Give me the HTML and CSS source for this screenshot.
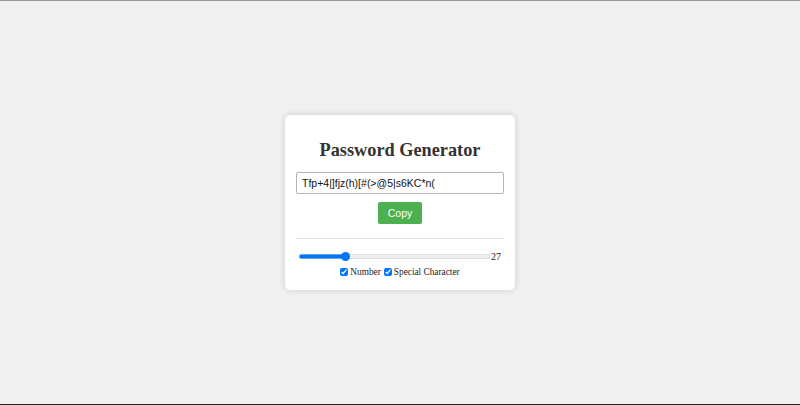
FILE: index.html
```html
<!DOCTYPE html>
<html>
<head>
<meta charset="utf-8">
<link rel="stylesheet" href="styles.css">
</head>
<body>
<div class="page">
  <div class="card">
    <h1 class="title">Password Generator</h1>
    <input class="pw" type="text" value="Tfp+4|]fjz(h)[#(&gt;@5|s6KC*n(" readonly>
    <div class="btn-row"><button class="copy">Copy</button></div>
    <div class="rule"></div>
    <div class="slider-row">
      <input class="range" type="range" min="5" max="100" value="27" style="--fill: 24%">
      <span class="len">27</span>
    </div>
    <div class="opts">
      <label><input type="checkbox" checked> Number</label>
      <label><input type="checkbox" checked> Special Character</label>
    </div>
  </div>
</div>
</body>
</html>
```

FILE: styles.css
```css
html, body {
  margin: 0;
  padding: 0;
}
body {
  background: #f0f0f0;
  font-family: "Liberation Serif", "Times New Roman", serif;
  color: #333;
}
.page {
  box-sizing: border-box;
  height: 405px;
  border-top: 1px solid #9a9a9a;
  border-bottom: 1px solid #222;
  display: flex;
  align-items: center;
  justify-content: center;
}
.card {
  box-sizing: border-box;
  width: 230px;
  height: 175px;
  background: #fff;
  border-radius: 5px;
  box-shadow: 0 0 6px rgba(0,0,0,0.15);
  padding: 24px 11px 12px;
  text-align: center;
}
.title {
  margin: 0 0 11px;
  height: 22px;
  line-height: 22px;
  font-size: 18.3px;
  font-weight: bold;
  color: #333;
}
.pw {
  box-sizing: border-box;
  display: block;
  width: 100%;
  height: 22px;
  font-family: "Liberation Sans", Arial, sans-serif;
  font-size: 10.5px;
  padding: 0 5px;
  border: 1px solid #b5b5b5;
  border-radius: 2px;
  color: #111;
  outline: none;
}
.btn-row {
  margin-top: 8px;
  height: 22px;
}
.copy {
  height: 22px;
  width: 44px;
  background: #4caf50;
  color: #fff;
  border: none;
  border-radius: 2px;
  font-family: "Liberation Sans", Arial, sans-serif;
  font-size: 10.5px;
  padding: 0;
  vertical-align: top;
}
.rule {
  height: 1px;
  background: #e3e3e8;
  margin: 14px 0 9px;
}
.slider-row {
  display: flex;
  align-items: center;
  height: 16px;
  padding-right: 3px;
}
.range {
  -webkit-appearance: none;
  appearance: none;
  flex: 1;
  margin: 0 1px 0 3px;
  height: 9px;
  background: transparent;
}
.range::-webkit-slider-runnable-track {
  height: 5px;
  border-radius: 3px;
  background: linear-gradient(to right, #0075ff 0, #0075ff var(--fill), #efefef var(--fill), #efefef 100%);
  box-shadow: inset 0 0 0 0.5px #d0d0d0;
}
.range::-webkit-slider-thumb {
  -webkit-appearance: none;
  appearance: none;
  width: 9px;
  height: 9px;
  border-radius: 50%;
  background: #0075ff;
  margin-top: -2px;
  border: none;
}
.len {
  font-size: 10px;
  color: #222;
}
.opts {
  margin-top: 2px;
  height: 12px;
  font-size: 9.3px;
  color: #222;
  display: flex;
  justify-content: center;
  align-items: center;
  gap: 3px;
}
.opts label {
  display: flex;
  align-items: center;
}
.opts input {
  width: 8px;
  height: 8px;
  margin: 0 2px 0 0;
  accent-color: #0075ff;
}
```
